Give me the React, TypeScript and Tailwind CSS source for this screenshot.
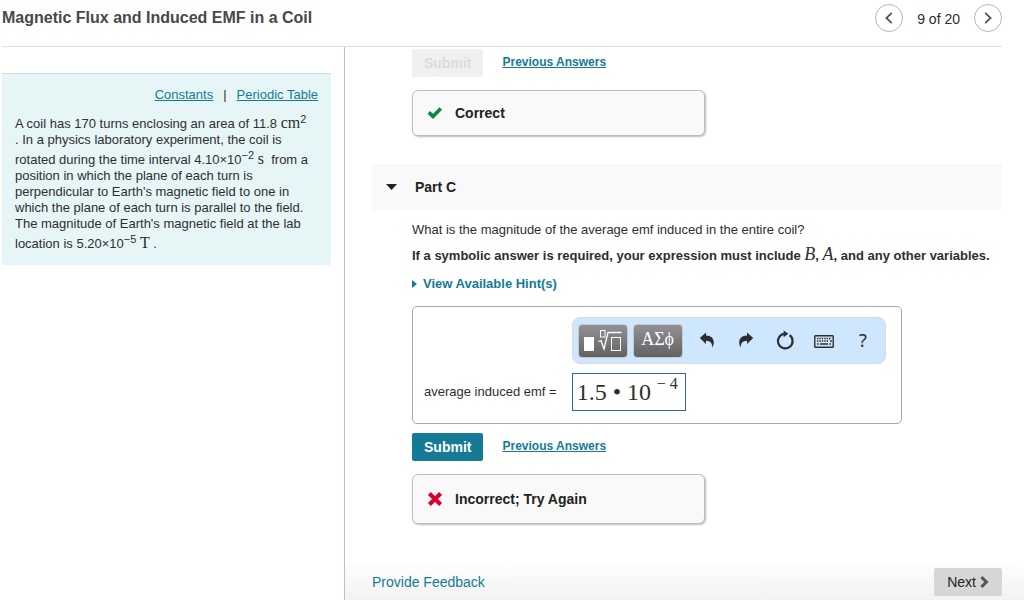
import React, { useState } from 'react';

const PROMPT_LINK = 'text-[#147a96] underline';

const CheckIcon: React.FC = () => (
  <svg width="16" height="14" viewBox="0 0 16 14" fill="none" stroke="#0e8740" strokeWidth="3.6" aria-hidden="true">
    <path d="M1.8 6.4L6 10.4L13.8 2.6" />
  </svg>
);

const CrossIcon: React.FC = () => (
  <svg width="16" height="16" viewBox="0 0 16 16" fill="none" stroke="#d9002b" strokeWidth="4.2" aria-hidden="true">
    <path d="M2.4 2.6L13.6 13.4M13.6 2.6L2.4 13.4" />
  </svg>
);

const UndoIcon: React.FC<{ className?: string }> = ({ className = '' }) => (
  <svg width="16" height="16" viewBox="0 0 16 16" fill="currentColor" className={className} aria-hidden="true">
    <path d="M0.8 6 L7 0.4 V3.6 C12.2 3.6 15 6.8 14.8 10.8 C14.7 12.8 14 14.2 13.2 15.4 C13.3 11 11.4 8.8 7 8.7 V12 Z" />
  </svg>
);

const ResetIcon: React.FC = () => (
  <svg width="20" height="20" viewBox="0 0 20 20" aria-hidden="true">
    <path d="M14.6 5.2 A7.3 7.3 0 1 1 9 3.9" fill="none" stroke="currentColor" strokeWidth="2.2" />
    <path d="M8.6 0.4 L13.4 3.8 L8.6 7.2 Z" fill="currentColor" />
  </svg>
);

const KeyboardIcon: React.FC = () => (
  <svg width="20" height="13" viewBox="0 0 20 13" aria-hidden="true">
    <rect x="0.75" y="0.75" width="18.5" height="11.5" rx="0.8" fill="none" stroke="currentColor" strokeWidth="1.4" />
    <path d="M3 3.5H17.5M3 6H14.5" stroke="currentColor" strokeWidth="1.4" strokeDasharray="1.4 1" />
    <path d="M3 9H4.6M6 9H14M15.4 9H17M17 5V7" stroke="currentColor" strokeWidth="1.4" />
  </svg>
);

const TemplateIcon: React.FC = () => (
  <svg width="38" height="24" viewBox="0 0 38 24" fill="none" stroke="#fff" aria-hidden="true">
    <rect x="0" y="8" width="10" height="14" fill="#fff" stroke="none" />
    <path d="M14.5 12.5L17 11.5L20 20L24 3.5H37.5" strokeWidth="1.3" />
    <rect x="16.5" y="1.5" width="4.5" height="6.5" />
    <rect x="27.5" y="8.5" width="9" height="13" />
  </svg>
);

const NavButton: React.FC<{ label: string; path: string }> = ({ label, path }) => (
  <button
    aria-label={label}
    className="flex size-7 items-center justify-center rounded-full border border-[#b5b5b5] bg-white text-[#555]"
  >
    <svg width="8" height="12" viewBox="0 0 8 12" fill="none" stroke="currentColor" strokeWidth="1.8" aria-hidden="true">
      <path d={path} />
    </svg>
  </button>
);

const SubmitRow: React.FC<{ disabled?: boolean }> = ({ disabled = false }) => (
  <div className="flex items-start gap-[19px]">
    <button
      disabled={disabled}
      className={`h-7 rounded-xs px-3 text-sm font-bold ${
        disabled ? 'bg-[#f0f0f0] text-[#dcdcdc]' : 'bg-[#147a96] text-white'
      }`}
    >
      Submit
    </button>
    <a href="#previous" className={`pt-1 text-xs leading-[18px] font-bold ${PROMPT_LINK}`}>
      Previous Answers
    </a>
  </div>
);

const Feedback: React.FC<{ icon: React.ReactNode; className?: string; children: React.ReactNode }> = ({
  icon,
  className = 'py-3',
  children,
}) => (
  <div
    className={`flex w-[293px] max-w-full items-center gap-3 rounded-md border border-[#bdbdbd] bg-[#f9f9f9] px-3.5 text-sm leading-5 font-bold text-[#222] shadow-[1px_1px_2px_#bbb] ${className}`}
  >
    {icon}
    {children}
  </div>
);

const Unit: React.FC<{ children: React.ReactNode }> = ({ children }) => (
  <span className="font-['Liberation_Serif',serif] text-base leading-4">{children}</span>
);

const Power: React.FC<{ children: React.ReactNode }> = ({ children }) => (
  <sup className="text-[11px]">{children}</sup>
);

const App: React.FC = () => {
  const [base, setBase] = useState('1.5 • 10');
  const [exponent, setExponent] = useState('− 4');

  return (
    <div className="flex min-h-screen flex-col bg-white pl-0.5 font-['Liberation_Sans',Arial,sans-serif] text-[#2e2e2e]">
      <header className="mr-[22px] flex h-[47px] items-start justify-between border-b border-[#ddd] pt-1">
        <h1 className="pt-0.5 text-base leading-6 font-bold text-[#484848]">Magnetic Flux and Induced EMF in a Coil</h1>
        <nav className="flex items-center gap-3.5">
          <NavButton label="Previous item" path="M6.8 0.8L1.4 6L6.8 11.2" />
          <span className="pt-0.5 text-sm">9 of 20</span>
          <NavButton label="Next item" path="M1.2 0.8L6.6 6L1.2 11.2" />
        </nav>
      </header>

      <div className="flex grow">
        <aside className="w-[343px] shrink-0 border-r border-[#b0c4d4] pt-[26px] pr-[13px]">
          <section className="border-t border-[#d3dcdc] bg-[#e6f6f7] px-[13px] pt-3 pb-[13px]">
            <div className="flex justify-end gap-2.5 text-[13px] leading-[18px]">
              <a href="#constants" className={PROMPT_LINK}>Constants</a>
              <span>|</span>
              <a href="#periodic" className={PROMPT_LINK}>Periodic Table</a>
            </div>
            <div className="-mr-2.5 pt-[11px] text-[13px] leading-4">
              <p>
                A coil has 170 turns enclosing an area of 11.8 <Unit>cm</Unit><Power>2</Power>
                <br />
                . In a physics laboratory experiment, the coil is
              </p>
              <p className="pt-[3px]">
                rotated during the time interval 4.10×10<Power>−2</Power> <Unit>s</Unit>&nbsp; from a
                <br />
                position in which the plane of each turn is
                <br />
                perpendicular to Earth's magnetic field to one in
                <br />
                which the plane of each turn is parallel to the field.
                <br />
                The magnitude of Earth's magnetic field at the lab
              </p>
              <p className="pt-[3px]">
                location is 5.20×10<Power>−5</Power> <Unit>T</Unit> .
              </p>
            </div>
          </section>
        </aside>

        <main className="flex min-w-0 grow flex-col">
          <div className="grow pr-[22px] pl-[27px]">
            <div className="flex flex-col gap-[13px] pt-0.5 pl-10">
              <SubmitRow disabled />
              <Feedback icon={<CheckIcon />}>Correct</Feedback>
            </div>

            <h2 className="mt-7 bg-[#f9f9f9]">
              <button className="flex w-full items-center gap-[18px] px-3.5 py-3 text-left text-sm leading-[22px] font-bold text-[#222]">
                <svg width="11" height="6" viewBox="0 0 11 6" fill="currentColor" aria-hidden="true">
                  <path d="M0 0H11L5.5 6Z" />
                </svg>
                Part C
              </button>
            </h2>

            <div className="pt-[11px] pl-10">
              <p className="text-[13px] leading-[18px]">What is the magnitude of the average emf induced in the entire coil?</p>
              <p className="pt-1.5 text-[13px] leading-[18px] font-bold whitespace-nowrap">
                If a symbolic answer is required, your expression must include{' '}
                <i className="font-['Liberation_Serif',serif] text-lg leading-[18px] font-normal">B</i>,{' '}
                <i className="font-['Liberation_Serif',serif] text-lg leading-[18px] font-normal">A</i>, and any other variables.
              </p>
              <button className="mt-2.5 flex items-center gap-1.5 text-[13px] leading-[18px] font-bold text-[#147a96]">
                <svg width="5" height="8" viewBox="0 0 5 8" fill="currentColor" aria-hidden="true">
                  <path d="M0 0L5 4L0 8Z" />
                </svg>
                View Available Hint(s)
              </button>

              <div className="mt-[13px] mb-[9px] grid w-[490px] grid-cols-[auto_1fr] items-center gap-x-[15px] gap-y-[9px] rounded-[5px] border border-[#a8a8a8] pt-2.5 pr-[15px] pb-3 pl-[11px]">
                <div className="col-start-2 flex h-[47px] items-center rounded-lg border border-[#d9d9de] bg-[#cfe6ff] pl-[5px] text-[#2e2e2e]">
                  <button
                    aria-label="Templates"
                    className="flex h-[34px] w-[50px] items-center justify-center rounded-sm border border-[#c8c8c8] bg-linear-to-b from-[#929198] to-[#626262]"
                  >
                    <TemplateIcon />
                  </button>
                  <button className="ml-[5px] h-[34px] w-[50px] rounded-sm border border-[#c8c8c8] bg-linear-to-b from-[#929198] to-[#626262] pb-1 font-['Liberation_Serif',serif] text-lg leading-6 text-white">
                    ΑΣϕ
                  </button>
                  <div className="flex grow items-center justify-between pr-3 pb-0.5 pl-3.5">
                    <button aria-label="Undo" className="flex w-5 justify-center"><UndoIcon /></button>
                    <button aria-label="Redo" className="flex w-5 justify-center"><UndoIcon className="-scale-x-100" /></button>
                    <button aria-label="Reset" className="flex w-5 justify-center"><ResetIcon /></button>
                    <button aria-label="Keyboard shortcuts" className="flex w-5 justify-center pt-1"><KeyboardIcon /></button>
                    <button aria-label="Help" className="w-5 font-['Noto_Sans',sans-serif] text-lg leading-6">?</button>
                  </div>
                </div>

                <label htmlFor="emf" className="text-[13px] leading-[18px]">average induced emf =</label>
                <div className="flex h-[38px] w-[114px] border border-[#2f62c4] bg-white pl-1 font-['Liberation_Serif',serif] text-[#2e2e2e]">
                  <input
                    id="emf"
                    value={base}
                    onChange={(e) => setBase(e.target.value)}
                    className="w-20 bg-transparent text-2xl outline-none"
                  />
                  <input
                    aria-label="exponent"
                    value={exponent}
                    onChange={(e) => setExponent(e.target.value)}
                    className="h-5 w-6 bg-transparent text-base outline-none"
                  />
                </div>
              </div>

              <div className="flex flex-col gap-[13px]">
                <SubmitRow />
                <Feedback icon={<CrossIcon />} className="py-3.5">Incorrect; Try Again</Feedback>
              </div>
            </div>
          </div>

          <footer className="flex items-center justify-between bg-linear-to-b from-white to-[#f2f2f2] pt-2 pr-[22px] pb-1 pl-[27px]">
            <a href="#feedback" className="text-sm text-[#147a96]">Provide Feedback</a>
            <button className="flex h-7 items-center gap-1 rounded-xs bg-[#d6d6d6] px-[13px] text-sm text-[#222]">
              Next
              <svg width="9" height="12" viewBox="0 0 9 12" fill="none" stroke="#555" strokeWidth="3" aria-hidden="true">
                <path d="M1.4 1.2L6.4 6L1.4 10.8" />
              </svg>
            </button>
          </footer>
        </main>
      </div>
    </div>
  );
};

export default App;
